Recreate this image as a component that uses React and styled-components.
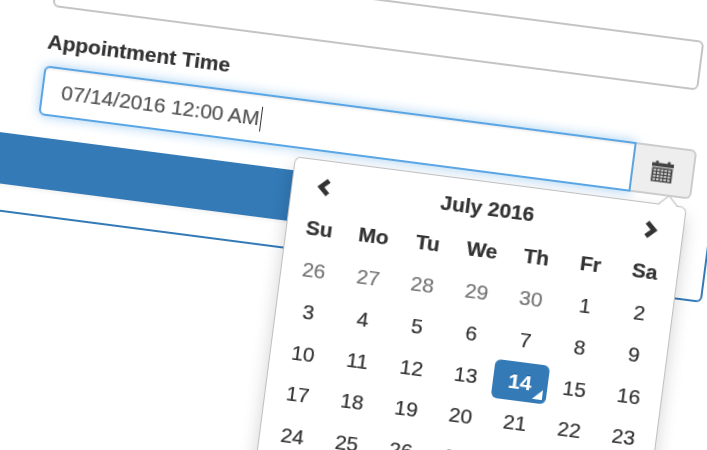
import React from 'react'
import styled, { createGlobalStyle } from 'styled-components'

const GlobalStyle = createGlobalStyle`
  html, body {
    margin: 0;
    width: 707px;
    height: 450px;
    overflow: hidden;
    background: #fff;
  }
  body {
    font-family: "Liberation Sans", Arial, sans-serif;
    font-size: 21px;
    color: #333;
    -webkit-text-stroke: 0.2px currentColor;
  }
`

const WEEK = ['Su', 'Mo', 'Tu', 'We', 'Th', 'Fr', 'Sa']
const OLD_JUNE = [26, 27, 28, 29, 30]
const OLD_AUGUST = [1, 2, 3, 4, 5, 6]
const JULY = Array.from({ length: 31 }, (_, i) => i + 1)

function Chevron({ dir }) {
  return (
    <ChevronSvg viewBox="0 0 18 20">
      <polyline
        points={dir === 'left' ? '13,3 5.5,10 13,17' : '5,3 12.5,10 5,17'}
        fill="none"
        stroke="#333"
        strokeWidth="4.8"
      />
    </ChevronSvg>
  )
}

function CalendarIcon() {
  const holes = []
  for (let row = 0; row < 4; row++) {
    for (let col = 0; col < 5; col++) {
      holes.push(<rect key={row + '-' + col} x={2.2 + col * 3.5} y={8.3 + row * 3} width="2.4" height="2" fill="#ccc" />)
    }
  }
  return (
    <svg width="22" height="22" viewBox="0 0 21 21">
      <rect x="0" y="2.5" width="21" height="3.6" fill="#444" />
      <rect x="3.5" y="0.5" width="2.6" height="3.5" rx="1" fill="#444" />
      <rect x="14.9" y="0.5" width="2.6" height="3.5" rx="1" fill="#444" />
      <rect x="0.6" y="7" width="19.8" height="13.6" fill="#444" />
      {holes}
    </svg>
  )
}

export default function App() {
  return (
    <>
      <GlobalStyle />
      <Scene>
        <TopInput />
        <FieldLabel>Appointment Time</FieldLabel>
        <InputGroup>
          <DateInput>
            07/14/2016 12:00 AM<Caret />
          </DateInput>
          <Addon>
            <CalendarIcon />
          </Addon>
          <Picker>
            <Grid>
              <NavCell><Chevron dir="left" /></NavCell>
              <MonthCell>July 2016</MonthCell>
              <NavCell><Chevron dir="right" /></NavCell>
              {WEEK.map((d) => <DayHead key={d}>{d}</DayHead>)}
              {OLD_JUNE.map((d) => <Day key={'jun' + d} $old>{d}</Day>)}
              {JULY.map((d) => <Day key={d} $active={d === 14}>{d}</Day>)}
              {OLD_AUGUST.map((d) => <Day key={'aug' + d} $old>{d}</Day>)}
            </Grid>
          </Picker>
        </InputGroup>
        <SubmitBar />
      </Scene>
    </>
  )
}

const Scene = styled.div`
  box-sizing: border-box;
  width: 754px;
  padding: 103px 27px 26px 0;
  border: 2px solid #337ab7;
  border-radius: 6px;
  transform-origin: 0 0;
  transform: translate(0.9px, -156.2px) rotate(7.4deg);
  filter: blur(0.35px);
`

const TopInput = styled.div`
  box-sizing: border-box;
  height: 50px;
  margin-left: 70px;
  margin-right: 2px;
  background: #fff;
  border: 2px solid #c4c4c4;
  border-radius: 6px;
`

const FieldLabel = styled.label`
  display: block;
  margin: 20px 0 9px 70px;
  font-weight: 700;
  line-height: 30px;
  color: #333;
`

const InputGroup = styled.div`
  position: relative;
  display: flex;
  height: 50px;
  margin-left: 70px;
`

const DateInput = styled.div`
  box-sizing: border-box;
  flex: 0 0 597px;
  display: flex;
  align-items: center;
  padding: 0 18px;
  background: #fff;
  color: #555;
  border: 2px solid #5aa5e4;
  border-radius: 6px 0 0 6px;
  box-shadow: inset 0 1.5px 1.5px rgba(0, 0, 0, 0.075), 0 0 12px rgba(102, 175, 233, 0.6);
`

const Caret = styled.span`
  width: 1.5px;
  height: 25px;
  margin-left: 1px;
  background: #333;
`

const Addon = styled.div`
  box-sizing: border-box;
  flex: 0 0 61px;
  display: flex;
  align-items: center;
  justify-content: center;
  padding: 2px 2px 0 0;
  background: #eee;
  border: 2px solid #ccc;
  border-left: 0;
  border-radius: 0 6px 6px 0;
`

const Picker = styled.div`
  position: absolute;
  z-index: 2;
  left: 260px;
  top: 58px;
  box-sizing: border-box;
  width: 395px;
  padding: 5px;
  background: #fff;
  border: 1.5px solid rgba(0, 0, 0, 0.25);
  border-radius: 6px;
  box-shadow: 0 9px 18px rgba(0, 0, 0, 0.175);

  &::before,
  &::after {
    content: '';
    position: absolute;
    border-style: solid;
    border-color: transparent;
    border-top: 0;
  }
  &::before {
    right: 8px;
    top: -11px;
    border-width: 0 10.5px 10.5px;
    border-bottom-color: #ccc;
  }
  &::after {
    right: 9.5px;
    top: -9px;
    border-width: 0 9px 9px;
    border-bottom-color: #fff;
  }
`

const Grid = styled.div`
  display: grid;
  grid-template-columns: repeat(7, 1fr);
  grid-auto-rows: 41.9px;
  text-align: center;
`

const Cell = styled.div`
  display: flex;
  align-items: center;
  justify-content: center;
`

const NavCell = styled(Cell)``

const ChevronSvg = styled.svg`
  width: 18px;
  height: 20px;
`

const MonthCell = styled(Cell)`
  grid-column: span 5;
  font-weight: 700;
`

const DayHead = styled(Cell)`
  font-weight: 700;
`

const Day = styled(Cell)`
  position: relative;
  margin: 1px 0;
  border-radius: 6px;
  color: ${(p) => (p.$active ? '#fff' : p.$old ? '#777' : '#333')};
  background: ${(p) => (p.$active ? '#337ab7' : 'transparent')};
  font-weight: ${(p) => (p.$active ? 700 : 400)};
  text-shadow: ${(p) => (p.$active ? '0 -1px 0 rgba(0,0,0,.25)' : 'none')};

  ${(p) =>
    p.$active &&
    `
    &::after {
      content: '';
      position: absolute;
      right: 4px;
      bottom: 4px;
      border-left: 10px solid transparent;
      border-bottom: 10px solid #fff;
    }
  `}
`

const SubmitBar = styled.div`
  height: 51px;
  margin-top: 22px;
  margin-right: -2px;
  background: #337ab7;
  box-shadow: 0 2px 4px rgba(0, 0, 0, 0.06);
`
